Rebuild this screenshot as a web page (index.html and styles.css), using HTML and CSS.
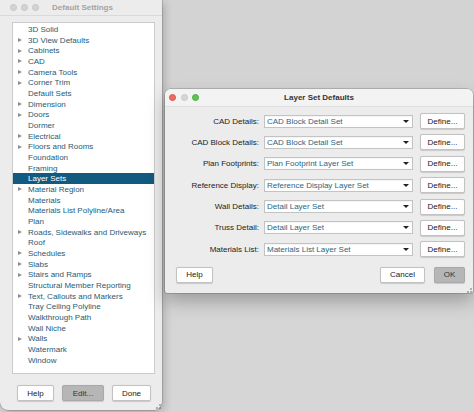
FILE: index.html
```html
<!DOCTYPE html>
<html>
<head>
<meta charset="utf-8">
<link rel="stylesheet" href="styles.css">
</head>
<body>
<div class="desktop">
  <div class="win settings">
    <div class="titlebar">
      <div class="lights"><span class="dot off"></span><span class="dot off"></span><span class="dot off"></span></div>
      <div class="title inactive">Default Settings</div>
      <div></div>
    </div>
    <div class="list">
      <div class="row"><span class="tw"></span>3D Solid</div>
      <div class="row"><span class="tw"><i class="tri"></i></span>3D View Defaults</div>
      <div class="row"><span class="tw"><i class="tri"></i></span>Cabinets</div>
      <div class="row"><span class="tw"><i class="tri"></i></span>CAD</div>
      <div class="row"><span class="tw"><i class="tri"></i></span>Camera Tools</div>
      <div class="row"><span class="tw"><i class="tri"></i></span>Corner Trim</div>
      <div class="row"><span class="tw"></span>Default Sets</div>
      <div class="row"><span class="tw"><i class="tri"></i></span>Dimension</div>
      <div class="row"><span class="tw"><i class="tri"></i></span>Doors</div>
      <div class="row"><span class="tw"></span>Dormer</div>
      <div class="row"><span class="tw"><i class="tri"></i></span>Electrical</div>
      <div class="row"><span class="tw"><i class="tri"></i></span>Floors and Rooms</div>
      <div class="row"><span class="tw"></span>Foundation</div>
      <div class="row"><span class="tw"></span>Framing</div>
      <div class="row selected"><span class="tw"></span>Layer Sets</div>
      <div class="row"><span class="tw"><i class="tri"></i></span>Material Region</div>
      <div class="row"><span class="tw"></span>Materials</div>
      <div class="row"><span class="tw"></span>Materials List Polyline/Area</div>
      <div class="row"><span class="tw"></span>Plan</div>
      <div class="row"><span class="tw"><i class="tri"></i></span>Roads, Sidewalks and Driveways</div>
      <div class="row"><span class="tw"></span>Roof</div>
      <div class="row"><span class="tw"><i class="tri"></i></span>Schedules</div>
      <div class="row"><span class="tw"><i class="tri"></i></span>Slabs</div>
      <div class="row"><span class="tw"><i class="tri"></i></span>Stairs and Ramps</div>
      <div class="row"><span class="tw"></span>Structural Member Reporting</div>
      <div class="row"><span class="tw"><i class="tri"></i></span>Text, Callouts and Markers</div>
      <div class="row"><span class="tw"></span>Tray Ceiling Polyline</div>
      <div class="row"><span class="tw"></span>Walkthrough Path</div>
      <div class="row"><span class="tw"></span>Wall Niche</div>
      <div class="row"><span class="tw"><i class="tri"></i></span>Walls</div>
      <div class="row"><span class="tw"></span>Watermark</div>
      <div class="row"><span class="tw"></span>Window</div>
    </div>
    <div class="btnrow">
      <button class="btn w37">Help</button>
      <button class="btn w42 gray">Edit...</button>
      <button class="btn w39">Done</button>
    </div>
    <svg class="grip" width="5" height="5" viewBox="0 0 5 5"><circle cx="4" cy="1" r="0.7" fill="#444"/><circle cx="4" cy="4" r="0.7" fill="#444"/><circle cx="1" cy="4" r="0.7" fill="#444"/></svg>
  </div>

  <div class="win dialog">
    <div class="titlebar dtitle">
      <div class="lights dl"><span class="dot red"></span><span class="dot gry"></span><span class="dot green"></span></div>
      <div class="title">Layer Set Defaults</div>
      <div></div>
    </div>
    <div class="form">
      <div class="frow"><label>CAD Details:</label><div class="select">CAD Block Detail Set<i class="caret"></i></div><button class="btn define">Define...</button></div>
      <div class="frow"><label>CAD Block Details:</label><div class="select">CAD Block Detail Set<i class="caret"></i></div><button class="btn define">Define...</button></div>
      <div class="frow"><label>Plan Footprints:</label><div class="select">Plan Footprint Layer Set<i class="caret"></i></div><button class="btn define">Define...</button></div>
      <div class="frow"><label>Reference Display:</label><div class="select">Reference Display Layer Set<i class="caret"></i></div><button class="btn define">Define...</button></div>
      <div class="frow"><label>Wall Details:</label><div class="select">Detail Layer Set<i class="caret"></i></div><button class="btn define">Define...</button></div>
      <div class="frow"><label>Truss Detail:</label><div class="select">Detail Layer Set<i class="caret"></i></div><button class="btn define">Define...</button></div>
      <div class="frow"><label>Materials List:</label><div class="select">Materials List Layer Set<i class="caret"></i></div><button class="btn define">Define...</button></div>
    </div>
    <div class="dbtns">
      <button class="btn w37">Help</button>
      <div class="spacer"></div>
      <button class="btn w45">Cancel</button>
      <button class="btn w31 gray">OK</button>
    </div>
    <svg class="grip dgrip" width="5" height="5" viewBox="0 0 5 5"><circle cx="4" cy="1" r="0.7" fill="#444"/><circle cx="4" cy="4" r="0.7" fill="#444"/><circle cx="1" cy="4" r="0.7" fill="#444"/></svg>
  </div>
</div>
</body>
</html>
```
FILE: styles.css
```css
* { box-sizing: border-box; }
html, body { margin: 0; padding: 0; }
body {
  width: 474px;
  height: 412px;
  overflow: hidden;
  background: #d5d5d5;
  font-family: "Liberation Sans", Arial, sans-serif;
  font-size: 8px;
  color: #222;
}
.desktop {
  position: relative;
  width: 474px;
  height: 412px;
  background: linear-gradient(180deg, #d3d3d3 0%, #d6d6d6 100%);
}
.win {
  position: absolute;
  background: #ececec;
  display: flex;
  flex-direction: column;
}
.settings {
  left: 0;
  top: 0;
  width: 162px;
  height: 410px;
  border-radius: 0 0 8px 8px;
  box-shadow: 0 0 0 0.5px rgba(0,0,0,0.28), 2px 3px 10px rgba(0,0,0,0.22);
}
.titlebar {
  height: 16px;
  flex: none;
  display: grid;
  grid-template-columns: 1fr auto 1fr;
  align-items: center;
  border-bottom: 1px solid #dadada;
}
.lights {
  display: flex;
  gap: 4px;
  padding-left: 10px;
}
.dot {
  width: 7px;
  height: 7px;
  border-radius: 50%;
  display: block;
}
.dot.off { background: #d3d3d3; border: 0.5px solid #c6c6c6; }
.dot.red { background: #ee6a5f; border: 0.5px solid #d9544a; }
.dot.gry { background: #d6d6d6; border: 0.5px solid #c8c8c8; }
.dot.green { background: #5fc453; border: 0.5px solid #4aae3f; }
.title {
  font-weight: bold;
  font-size: 8px;
  color: #333;
  white-space: nowrap;
}
.title.inactive { color: #a3a3a3; padding-left: 3px; }

.list {
  margin: 6px 7px 0 12px;
  padding-top: 1px;
  height: 352px;
  flex: none;
  background: #fff;
  border: 1px solid #cbcbcb;
  overflow: hidden;
}
.row {
  height: 10.68px;
  display: flex;
  align-items: center;
  color: #285a73;
  white-space: nowrap;
  font-size: 8px;
}
.row.selected {
  background: #135a80;
  color: #fff;
}
.tw {
  width: 15px;
  flex: none;
  display: flex;
  align-items: center;
  padding-left: 5px;
}
.tri {
  display: block;
  width: 0;
  height: 0;
  border-left: 4px solid #8e8e8e;
  border-top: 2.5px solid transparent;
  border-bottom: 2.5px solid transparent;
}
.btnrow {
  display: flex;
  gap: 8px;
  margin: 11px 0 0 17px;
}
.btn {
  height: 16px;
  padding: 0;
  font-family: "Liberation Sans", Arial, sans-serif;
  font-size: 8px;
  color: #222;
  background: #fefefe;
  border: 1px solid #c2c2c2;
  border-radius: 2px;
  box-shadow: 0 0.5px 1px rgba(0,0,0,0.15);
  text-align: center;
}
.btn.gray { background: #b6b6b6; border-color: #a9a9a9; color: #333; }
.w37 { width: 37px; }
.w39 { width: 39px; }
.w42 { width: 42px; }
.w45 { width: 45px; }
.w31 { width: 31px; }
.grip { position: absolute; right: 1px; bottom: 1px; }

.dialog {
  left: 165px;
  top: 89px;
  width: 308px;
  height: 204px;
  border-radius: 6px 6px 2px 2px;
  box-shadow: 0 0 0 0.5px rgba(0,0,0,0.3), 0 8px 18px rgba(0,0,0,0.28);
}
.dtitle {
  height: 18px;
  background: #f3f3f3;
  border-radius: 6px 6px 0 0;
  border-bottom: 1px solid #dedede;
}
.lights.dl { padding-left: 4px; gap: 4.6px; }
.form {
  padding-top: 6px;
  display: flex;
  flex-direction: column;
  gap: 5.4px;
}
.frow {
  height: 16px;
  display: flex;
  align-items: center;
}
.frow label {
  width: 94px;
  text-align: right;
  color: #222;
  white-space: nowrap;
  flex: none;
}
.select {
  margin-left: 5px;
  width: 149px;
  height: 13px;
  flex: none;
  background: #fff;
  border: 1px solid #c3c3c3;
  box-shadow: inset 0 0.5px 1px rgba(0,0,0,0.08);
  color: #2c6580;
  padding-left: 2px;
  display: flex;
  align-items: center;
  justify-content: space-between;
  white-space: nowrap;
}
.caret {
  display: block;
  width: 0;
  height: 0;
  margin-right: 3px;
  border-top: 3.5px solid #222;
  border-left: 3px solid transparent;
  border-right: 3px solid transparent;
}
.btn.define { margin-left: 7px; width: 45px; flex: none; }
.dbtns {
  display: flex;
  margin-top: 9.6px;
  padding: 0 8px 0 11px;
  gap: 9px;
}
.spacer { flex: 1; }
.dgrip { right: 1px; bottom: 0px; }
```
